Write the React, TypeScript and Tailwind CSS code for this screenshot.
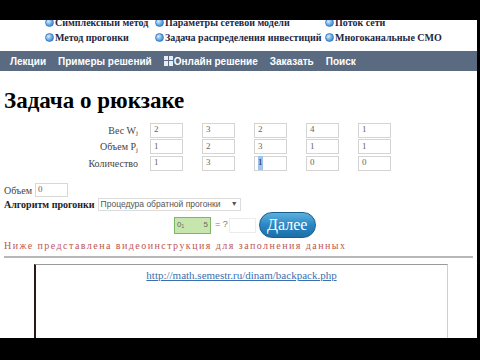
import React from 'react'

const topLinks = [
  ['Симплексный метод', 'Параметры сетевой модели', 'Поток сети'],
  ['Метод прогонки', 'Задача распределения инвестиций', 'Многоканальные СМО'],
]

const colWidths = ['w-[110px]', 'w-[170px]', 'w-[130px]']

const navItems = ['Лекции', 'Примеры решений', 'Онлайн решение', 'Заказать', 'Поиск']

const rows = [
  { label: 'Вес W', sub: 'j', values: ['2', '3', '2', '4', '1'] },
  { label: 'Объем P', sub: 'j', values: ['1', '2', '3', '1', '1'] },
  { label: 'Количество', sub: '', values: ['1', '3', '1', '0', '0'] },
]

function Bullet() {
  return (
    <span className="mr-[1px] inline-block h-[9px] w-[9px] shrink-0 rounded-full border border-[#3b7fc0] bg-[radial-gradient(circle_at_35%_35%,#d8ecff,#5aa0e0_60%,#2a6cb0)]" />
  )
}

function GridIcon() {
  return (
    <svg width="9" height="10" viewBox="0 0 9 10" className="mr-[1px]">
      <rect x="0" y="0" width="4" height="4" fill="#e8edf3" />
      <rect x="5" y="0" width="4" height="4" fill="#e8edf3" />
      <rect x="0" y="5" width="4" height="5" fill="#e8edf3" />
      <rect x="5" y="5" width="4" height="5" fill="#e8edf3" />
    </svg>
  )
}

function Cell({ value, selected }: { value: string; selected?: boolean }) {
  return (
    <div className="flex h-[15px] w-[33px] items-center border border-[#d4d4d4] bg-white pl-[3px] text-[9px] text-[#666]">
      <span className={selected ? 'bg-[#9cc4f0] text-[#222]' : ''}>{value}</span>
    </div>
  )
}

export default function App() {
  return (
    <div className="flex h-[360px] w-[480px] flex-col overflow-hidden bg-black">
      <div className="h-[20px] shrink-0" />
      <main className="h-[318px] w-[477px] shrink-0 overflow-hidden bg-white font-['Liberation_Serif',serif]">
        {/* links */}
        <div className="-mt-[5px] flex flex-col pl-[45px] text-[10px] font-bold leading-[15px] text-[#1d2740]">
          {topLinks.map((row, i) => (
            <div key={i} className="flex h-[15px] items-center">
              {row.map((name, j) => (
                <div key={name} className={`flex items-center ${colWidths[j]}`}>
                  <Bullet />
                  <span className="whitespace-nowrap">{name}</span>
                </div>
              ))}
            </div>
          ))}
        </div>

        {/* nav */}
        <nav className="mt-[6px] flex h-[20px] items-center gap-[12px] bg-[#5a6b81] pl-[10px] font-['Liberation_Sans',sans-serif] text-[10px] font-bold text-white">
          {navItems.map((n) => (
            <span key={n} className="flex items-center whitespace-nowrap">
              {n === 'Онлайн решение' && <GridIcon />}
              {n}
            </span>
          ))}
        </nav>

        <h1 className="mt-[17px] pl-[4px] font-['Liberation_Serif',serif] text-[23px] font-bold leading-[26px] text-black">
          Задача о рюкзаке
        </h1>

        {/* table */}
        <div className="mt-[8px] flex flex-col gap-[0.5px]">
          {rows.map((r, ri) => (
            <div key={r.label} className="flex h-[16px] items-center">
              <div className="w-[138px] text-right text-[10px] text-[#444]">
                {r.label}
                {r.sub && <sub className="text-[7px]">{r.sub}</sub>}
              </div>
              <div className="ml-[12px] flex gap-[19px]">
                {r.values.map((v, vi) => (
                  <Cell key={vi} value={v} selected={ri === 2 && vi === 2} />
                ))}
              </div>
            </div>
          ))}
        </div>

        <div className="mt-[12px] flex h-[14px] items-center pl-[4px] text-[10px] text-[#444]">
          <span>Объем</span>
          <div className="ml-[3px] flex h-[14px] w-[33px] items-center border border-[#d8d8d8] pl-[2px] text-[9px] text-[#666]">0</div>
        </div>

        <div className="flex h-[14px] items-center pl-[4px] text-[10px]">
          <span className="font-bold text-[#222]">Алгоритм прогонки</span>
          <div className="ml-[3px] flex h-[13px] w-[143px] items-center justify-between border border-[#dcdcdc] px-[2px] font-['Liberation_Sans',sans-serif] text-[8.5px] text-[#555]">
            <span>Процедура обратной прогонки</span>
            <span className="text-[7px]">▼</span>
          </div>
        </div>

        <div className="mt-[1px] flex h-[26px] items-center pl-[174px]">
          <div className="flex h-[17px] w-[37px] items-center justify-between border border-[#7fb862] bg-[#c6e6ad] px-[2px] font-['Liberation_Sans',sans-serif] text-[8px] text-[#666]">
            <span>0₁</span>
            <span>5</span>
          </div>
          <span className="ml-[4px] font-['Liberation_Sans',sans-serif] text-[9px] text-[#777]">= ?</span>
          <div className="ml-[1px] h-[15px] w-[27px] border border-[#ececec]" />
          <button className="ml-[3px] flex h-[26px] w-[57px] items-center justify-center rounded-full border border-[#1a5f8c] bg-[linear-gradient(#5cb0e0,#2a87c4_50%,#1d6ea6)] text-[16px] leading-none text-white">
            Далее
          </button>
        </div>

        <div className="mt-[1px] h-[13px] whitespace-nowrap pl-[4px] text-[10px] leading-[13px] tracking-[1.45px] text-[#c05552]">
          Ниже представлена видеоинструкция для заполнения данных
        </div>

        <div className="mx-[4px] mt-[4px] h-[2px] bg-[#b8b8b8]" />

        <div className="ml-[34px] mt-[6px] flex h-[90px] w-[414px] flex-col items-center border-l-[2px] border-t border-r border-l-[#2a1a14] border-t-[#9a9a9a] border-r-[#cfcfcf]">
          <a className="mt-[2px] text-[11px] text-[#3a6fb0] underline">http://math.semestr.ru/dinam/backpack.php</a>
        </div>
      </main>
    </div>
  )
}
